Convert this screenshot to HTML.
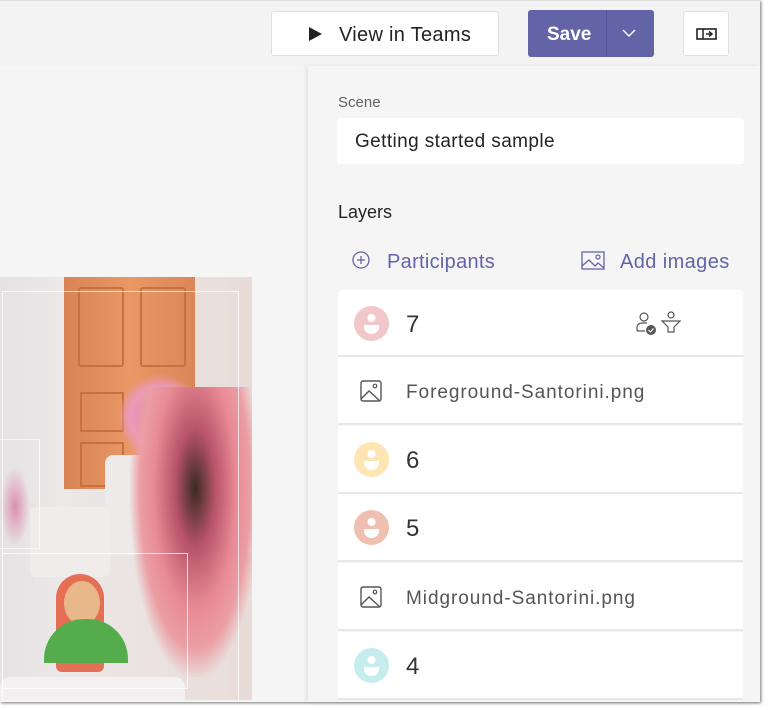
<!DOCTYPE html>
<html><head><style>
*{margin:0;padding:0;box-sizing:border-box}
body{width:768px;height:706px;background:#fff;font-family:"Liberation Sans",sans-serif;position:relative;overflow:hidden}
.frame{position:absolute;left:0;top:0;width:760px;height:702px;background:#f5f5f5;box-shadow:1px 1px 3px rgba(0,0,0,.55)}
.top{position:absolute;left:0;top:0;width:760px;height:66px;background:#f3f3f3;border-top:1px solid #ddd}
.btn{position:absolute;background:#fff;border:1px solid #e0e0e0;border-radius:3px}
.panel{position:absolute;left:308px;top:66px;width:452px;height:636px;background:#f5f5f5;box-shadow:-2px 0 4px rgba(0,0,0,.08)}
.row{position:absolute;left:0;width:405px;height:68px;border-bottom:2px solid #e8e8e8;background:#fff}
.av{position:absolute;left:16px;top:16px;width:35px;height:35px;border-radius:50%}
.num{position:absolute;left:68px;top:21px;font-size:24px;color:#333}
.fn{position:absolute;left:68px;top:25px;font-size:19px;color:#555;letter-spacing:0.95px}
.img{position:absolute;left:22px;top:23px}
</style></head><body>
<div class="frame">
<div class="top"></div>
<div class="btn" style="left:271px;top:11px;width:228px;height:45px">
<svg style="position:absolute;left:36px;top:15px" width="14" height="14"><path d="M1 0 L14 7 L1 14Z" fill="#222"/></svg>
<span style="position:absolute;left:67px;top:12px;font-size:20px;color:#222;letter-spacing:0.3px">View in Teams</span></div>
<div style="position:absolute;left:528px;top:10px;width:126px;height:47px;background:#6264a7;border-radius:3px">
<span style="position:absolute;left:19px;top:14px;color:#fff;font-size:19px;font-weight:bold">Save</span>
<div style="position:absolute;left:78px;top:0;width:1px;height:47px;background:#5355a0"></div>
<svg style="position:absolute;left:94px;top:19px" width="14" height="9"><path d="M1 1 L7 7 L13 1" stroke="#fff" stroke-width="1.4" fill="none"/></svg></div>
<div class="btn" style="left:683px;top:11px;width:46px;height:45px">
<svg style="position:absolute;left:12px;top:15px" width="22" height="14"><rect x="1" y="2" width="19" height="10" fill="none" stroke="#222" stroke-width="1.6"/><path d="M7 2v10M10 7h6M13 4.5l3 2.5-3 2.5" stroke="#222" stroke-width="1.5" fill="none"/></svg></div>

<div style="position:absolute;left:0;top:277px;width:252px;height:423px;overflow:hidden;background:linear-gradient(90deg,#e6e2e4 0,#ece8e8 60px,#e8dcd8 250px)">
<div style="position:absolute;left:64px;top:0;width:131px;height:212px;background:linear-gradient(90deg,#d88355,#e99865 50%,#db8658)"></div>
<div style="position:absolute;left:78px;top:10px;width:46px;height:80px;border:2px solid #c8703f;border-radius:3px"></div>
<div style="position:absolute;left:140px;top:10px;width:46px;height:80px;border:2px solid #c8703f;border-radius:3px"></div>
<div style="position:absolute;left:80px;top:115px;width:44px;height:40px;border:2px solid #c8703f"></div>
<div style="position:absolute;left:80px;top:165px;width:44px;height:45px;border:2px solid #c8703f"></div>
<div style="position:absolute;left:105px;top:178px;width:150px;height:100px;background:#eeeaea;border-radius:8px"></div>
<div style="position:absolute;left:30px;top:230px;width:80px;height:70px;background:#f0ecec;border-radius:6px"></div>
<div style="position:absolute;left:120px;top:95px;width:80px;height:90px;border-radius:50%;background:radial-gradient(circle,#e27fa7 0,#e99bbb 50%,rgba(233,155,187,0) 72%)"></div>
<div style="position:absolute;left:130px;top:110px;width:130px;height:290px;background:radial-gradient(ellipse at 50% 35%,#3a2a22 0,#b8536a 22%,#e88a94 45%,#eb9ea4 60%,rgba(235,158,164,0) 72%)"></div>
<div style="position:absolute;left:0;top:190px;width:30px;height:80px;background:radial-gradient(ellipse,#dc8fb0,rgba(220,143,176,0) 70%)"></div>
<div style="position:absolute;left:0;top:400px;width:185px;height:30px;background:#f2f0f0;border-radius:10px"></div>
<div style="position:absolute;left:2px;top:276px;width:186px;height:136px;border:1px solid rgba(255,255,255,.8)"></div>
<div style="position:absolute;left:2px;top:14px;width:237px;height:420px;border:1px solid rgba(255,255,255,.7)"></div>
<div style="position:absolute;left:-10px;top:162px;width:50px;height:110px;border:1px solid rgba(255,255,255,.7)"></div>
<div style="position:absolute;left:56px;top:297px;width:48px;height:98px;background:#e56f55;border-radius:24px 24px 6px 6px"></div>
<div style="position:absolute;left:64px;top:304px;width:36px;height:44px;background:#e8b88a;border-radius:50%"></div>
<div style="position:absolute;left:44px;top:342px;width:84px;height:44px;background:#55ac4c;border-radius:40px 40px 0 0"></div>
</div>

<div class="panel">
<div style="position:absolute;left:30px;top:28px;font-size:15px;color:#616161">Scene</div>
<div style="position:absolute;left:29px;top:52px;width:407px;height:46px;background:#fff;border-radius:3px"><span style="position:absolute;left:18px;top:13px;font-size:19px;color:#242424;letter-spacing:0.4px">Getting started sample</span></div>
<div style="position:absolute;left:30px;top:136px;font-size:18px;color:#242424">Layers</div>
<svg style="position:absolute;left:44px;top:185px" width="18" height="18"><circle cx="9" cy="9" r="8" fill="none" stroke="#6264a7" stroke-width="1.3"/><path d="M9 5v8M5 9h8" stroke="#6264a7" stroke-width="1.3"/></svg>
<div style="position:absolute;left:79px;top:185px;font-size:20px;color:#6264a7;letter-spacing:0.3px">Participants</div>
<svg style="position:absolute;left:273px;top:185px" width="24" height="19"><rect x="1" y="1" width="22" height="17" fill="none" stroke="#6264a7" stroke-width="1.3"/><path d="M1 15l7-6 6 6 3-3 6 5" stroke="#6264a7" stroke-width="1.3" fill="none"/><circle cx="17" cy="6" r="2" fill="none" stroke="#6264a7" stroke-width="1.2"/></svg>
<div style="position:absolute;left:312px;top:185px;font-size:20px;color:#6264a7;letter-spacing:0.4px">Add images</div>

<div style="position:absolute;left:30px;top:224px;width:405px;height:420px;border-radius:4px;overflow:hidden">
<div class="row" style="top:0;height:67px"><div class="av" style="background:#f2c7ca"></div>
<svg style="position:absolute;left:16px;top:16px" width="35" height="35"><circle cx="17.5" cy="12" r="4" fill="#fff"/><path d="M10 19h15v2a7.5 7 0 0 1-15 0z" fill="#fff"/></svg>
<span class="num">7</span>
<svg style="position:absolute;left:297px;top:21px" width="50" height="26"><circle cx="9" cy="6" r="4" fill="none" stroke="#555" stroke-width="1.2"/><path d="M2 20v-4c0-2 2-4 5-4h5" fill="none" stroke="#555" stroke-width="1.2"/><path d="M2 20h8" stroke="#555" stroke-width="1.2"/><circle cx="16" cy="19" r="5" fill="#555"/><path d="M13.5 19l2 2 3-3.5" stroke="#fff" stroke-width="1.2" fill="none"/><circle cx="36" cy="4" r="3" fill="none" stroke="#555" stroke-width="1.2"/><path d="M27 10h18l-6 6v5h-6v-5z" fill="none" stroke="#555" stroke-width="1.2"/></svg></div>
<div class="row" style="top:67px"><svg class="img" width="22" height="22"><rect x="1" y="1" width="20" height="20" rx="2" fill="none" stroke="#555" stroke-width="1.4"/><path d="M1 19l8-8 11 10" stroke="#555" stroke-width="1.4" fill="none"/><circle cx="15" cy="6" r="1.8" fill="none" stroke="#555" stroke-width="1.2"/></svg><span class="fn">Foreground-Santorini.png</span></div>
<div class="row" style="top:136px"><div class="av" style="background:#fde6b3"></div><svg style="position:absolute;left:16px;top:16px" width="35" height="35"><circle cx="17.5" cy="12" r="4" fill="#fff"/><path d="M10 19h15v2a7.5 7 0 0 1-15 0z" fill="#fff"/></svg><span class="num">6</span></div>
<div class="row" style="top:204px"><div class="av" style="background:#efbfb1"></div><svg style="position:absolute;left:16px;top:16px" width="35" height="35"><circle cx="17.5" cy="12" r="4" fill="#fff"/><path d="M10 19h15v2a7.5 7 0 0 1-15 0z" fill="#fff"/></svg><span class="num">5</span></div>
<div class="row" style="top:273px"><svg class="img" width="22" height="22"><rect x="1" y="1" width="20" height="20" rx="2" fill="none" stroke="#555" stroke-width="1.4"/><path d="M1 19l8-8 11 10" stroke="#555" stroke-width="1.4" fill="none"/><circle cx="15" cy="6" r="1.8" fill="none" stroke="#555" stroke-width="1.2"/></svg><span class="fn">Midground-Santorini.png</span></div>
<div class="row" style="top:342px"><div class="av" style="background:#c6ecee"></div><svg style="position:absolute;left:16px;top:16px" width="35" height="35"><circle cx="17.5" cy="12" r="4" fill="#fff"/><path d="M10 19h15v2a7.5 7 0 0 1-15 0z" fill="#fff"/></svg><span class="num">4</span></div>
</div>
</div>
</div>
</body></html>
